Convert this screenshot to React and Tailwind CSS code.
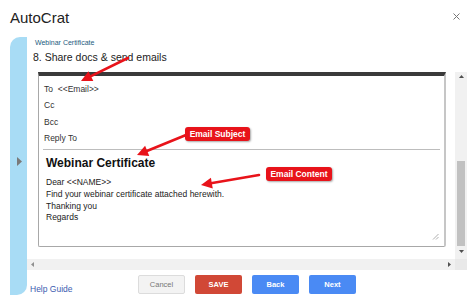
import React from 'react';

function Arrow({ x1, y1, x2, y2 }) {
  const dx = x2 - x1;
  const dy = y2 - y1;
  const len = Math.hypot(dx, dy);
  const ux = dx / len;
  const uy = dy / len;
  const head = 11;
  const half = 5.5;
  const bx = x2 - ux * head;
  const by = y2 - uy * head;
  const pts = `${x2},${y2} ${bx - uy * half},${by + ux * half} ${bx + uy * half},${by - ux * half}`;
  return (
    <g>
      <line x1={x1} y1={y1} x2={bx + ux} y2={by + uy} stroke="#e8131a" strokeWidth="2.6" strokeLinecap="round" />
      <polygon points={pts} fill="#e8131a" />
    </g>
  );
}

function Label({ children, className }) {
  return (
    <div className={`absolute h-[14px] flex items-center justify-center rounded-[3px] bg-[#e8131a] text-white text-[8.5px] font-bold shadow-[1px_1px_2px_rgba(0,0,0,0.35)] ${className}`}>
      {children}
    </div>
  );
}

function EmailBox() {
  return (
    <div className="relative w-[408px] h-[175px] ml-[11px] bg-white border-t-[4px] border-t-[#3a3a3a] border-l border-l-[#a8a8a8] border-r-2 border-r-[#c6c6c6] border-b border-b-[#a8a8a8] rounded-b-[2px] text-[#333]">
      <div className="pt-[5px] px-[5px] text-[8.5px]">
        <div className="h-[16.5px] flex items-center">To&nbsp;&nbsp;&lt;&lt;Email&gt;&gt;</div>
        <div className="h-[16.5px] flex items-center">Cc</div>
        <div className="h-[16.5px] flex items-center">Bcc</div>
        <div className="h-[16.5px] flex items-center">Reply To</div>
      </div>
      <div className="mt-[2px] mx-[4px] h-px bg-[#bdbdbd]" />
      <div className="mt-[6px] pl-[7px] text-[12px] leading-[14px] font-bold text-[#111]">Webinar Certificate</div>
      <div className="mt-[7px] pl-[7px] text-[8.5px] leading-[11.8px] text-[#222]">
        <div>Dear &lt;&lt;NAME&gt;&gt;</div>
        <div>Find your webinar certificate attached herewith.</div>
        <div>Thanking you</div>
        <div>Regards</div>
      </div>
      <svg className="absolute right-[5px] bottom-[6px]" width="7" height="7" viewBox="0 0 7 7">
        <line x1="1" y1="6.5" x2="6.5" y2="1" stroke="#999" strokeWidth="0.8" />
        <line x1="4" y1="6.5" x2="6.5" y2="4" stroke="#999" strokeWidth="0.8" />
      </svg>
    </div>
  );
}

function VScroll() {
  return (
    <div className="w-[12px] h-[187px] bg-[#f1f1f1] flex flex-col items-center">
      <svg className="mt-[3px]" width="5" height="3" viewBox="0 0 5 3"><polygon points="0,3 5,3 2.5,0" fill="#505050" /></svg>
      <div className="mt-[83px] w-[8px] h-[85px] bg-[#c1c1c1]" />
      <svg className="mt-[4px]" width="5" height="3" viewBox="0 0 5 3"><polygon points="0,0 5,0 2.5,3" fill="#505050" /></svg>
    </div>
  );
}

export default function App() {
  return (
    <div className="relative w-[474px] h-[304px] overflow-hidden bg-white font-['Liberation_Sans',Arial,sans-serif]">
      {/* header */}
      <div className="h-[37px] flex items-start justify-between pl-[10px] pr-[14px] pt-[9px]">
        <div className="text-[15px] leading-[17px] text-[#222]">AutoCrat</div>
        <svg className="mt-[4px]" width="7" height="7" viewBox="0 0 7 7">
          <path d="M0.5 0.5 L6.5 6.5 M6.5 0.5 L0.5 6.5" stroke="#777" strokeWidth="1" />
        </svg>
      </div>

      <div className="flex ml-[10px]">
        {/* blue side bar */}
        <div className="w-[17px] h-[258px] bg-[#a8dcf5] rounded-tl-[10px] rounded-br-[10px] pt-[120px] pl-[7px]">
          <svg width="5" height="9" viewBox="0 0 5 9"><polygon points="0,0 5,4.5 0,9" fill="#7a7a7a" /></svg>
        </div>

        <div className="w-[440px] flex flex-col">
          <div className="pl-[8px] pt-[1px] text-[7px] leading-[9px] text-[#1c5b7e]">Webinar Certificate</div>
          <div className="pl-[6px] mt-[3px] text-[10.5px] leading-[14px] text-[#222]">8. Share docs &amp; send emails</div>

          <div className="mt-[8px] flex justify-between">
            <div className="w-[428px]">
              <EmailBox />
            </div>
            <VScroll />
          </div>

          {/* horizontal scrollbar */}
          <div className="h-[11px] flex">
            <div className="w-[428px] bg-[#f1f1f1] flex items-center justify-between px-[4px]">
              <svg width="3" height="5" viewBox="0 0 3 5"><polygon points="3,0 3,5 0,2.5" fill="#909090" /></svg>
              <svg width="3" height="5" viewBox="0 0 3 5"><polygon points="0,0 0,5 3,2.5" fill="#505050" /></svg>
            </div>
            <div className="w-[12px] bg-[#e9e9e9]" />
          </div>

          {/* footer */}
          <div className="mt-[5px] flex items-start">
            <div className="w-[111px] pl-[3px] pt-[9px] text-[8.5px] leading-[10px] text-[#3b5cb0]">Help Guide</div>
            <div className="flex gap-[10px]">
              <div className="w-[47px] h-[19px] flex items-center justify-center bg-[#f3f3f3] border border-[#dcdcdc] rounded-[2px] text-[7.5px] text-[#777]">Cancel</div>
              <div className="w-[47px] h-[19px] flex items-center justify-center bg-[#d14836] rounded-[2px] text-[7.5px] font-bold text-white">SAVE</div>
              <div className="w-[47px] h-[19px] flex items-center justify-center bg-[#4a8af4] rounded-[2px] text-[7.5px] font-bold text-white">Back</div>
              <div className="w-[47px] h-[19px] flex items-center justify-center bg-[#4a8af4] rounded-[2px] text-[7.5px] font-bold text-white">Next</div>
            </div>
          </div>
        </div>
      </div>

      {/* annotations */}
      <svg className="absolute inset-0 pointer-events-none" width="474" height="304">
        <Arrow x1={128} y1={58} x2={81} y2={81} />
        <Arrow x1={186} y1={135} x2={137} y2={155} />
        <Arrow x1={259} y1={175} x2={201} y2={185} />
      </svg>
      <Label className="left-[185px] top-[127px] w-[65px]">Email Subject</Label>
      <Label className="left-[266px] top-[167px] w-[66px]">Email Content</Label>
    </div>
  );
}
